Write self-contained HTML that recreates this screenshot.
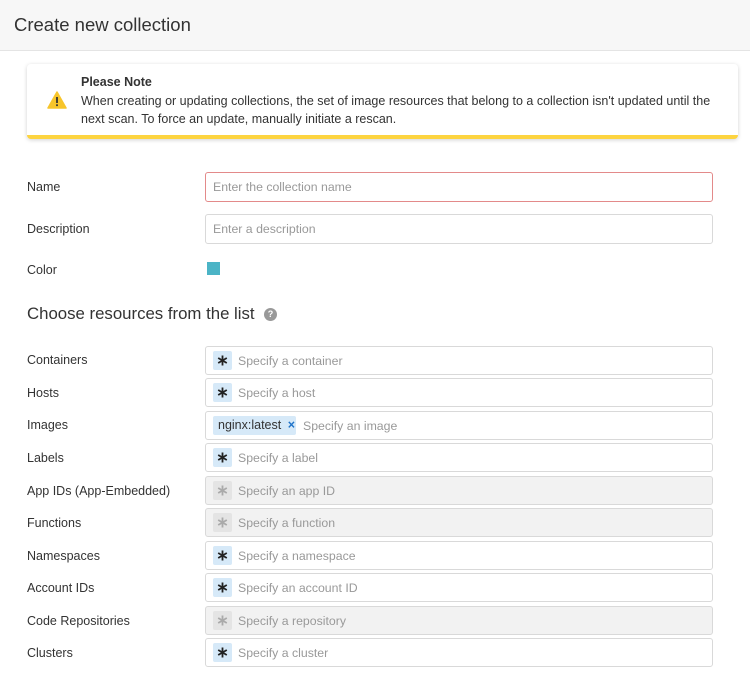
<!DOCTYPE html>
<html><head><style>
*{box-sizing:border-box;margin:0;padding:0}
body{width:750px;height:673px;overflow:hidden;background:#fff;font-family:"Liberation Sans",sans-serif;color:#333;position:relative}
.hdr{position:absolute;left:0;top:0;width:750px;height:51px;background:#f7f7f7;border-bottom:1px solid #e4e4e4}
.hdr h1{position:absolute;left:14px;top:14px;font-size:18.5px;font-weight:normal;color:#333}
.note{position:absolute;left:27px;top:64px;width:711px;height:75px;background:#fff;border-radius:4px;box-shadow:0 1px 4px rgba(0,0,0,.18);border-bottom:4px solid #fdd440}
.note b{position:absolute;left:54px;top:11px;font-size:12.5px}
.note p{position:absolute;left:54px;top:28px;width:640px;font-size:12.5px;line-height:18px}
.warn{position:absolute;left:20px;top:27px}
.lbl{position:absolute;left:27px;font-size:12.5px;color:#333}
.inp{position:absolute;left:205px;width:508px;height:29px;border:1px solid #d9d9d9;border-radius:3px;font-size:12.3px;color:#999;padding-left:7px;line-height:29px;background:#fff}
.inp.dis{background:#f2f2f2}
.chip{position:absolute;left:7px;top:4px;width:19px;height:19px;background:#d6e9f8;border-radius:2px}
.chip svg{position:absolute;left:4px;top:4px}
.chip path{stroke:#222}
.dis .chip{background:#e4e4e4}
.dis .chip path{stroke:#aaa}
.inp span.t{position:absolute;left:32px}
</style></head><body>
<div class="hdr"><h1>Create new collection</h1></div>
<div class="note">
<svg class="warn" width="20" height="18" viewBox="0 0 20 18"><path d="M10 1 L19 17 L1 17 Z" fill="#f7c52b" stroke="#f7c52b" stroke-linejoin="round" stroke-width="1.5"/><rect x="9.1" y="6" width="1.8" height="6" fill="#333"/><rect x="9.1" y="13.3" width="1.8" height="1.8" fill="#333"/></svg>
<b>Please Note</b>
<p>When creating or updating collections, the set of image resources that belong to a collection isn't updated until the next scan. To force an update, manually initiate a rescan.</p>
</div>
<div class="lbl" style="top:180px">Name</div>
<div class="inp" style="top:172px;height:30px;border-color:#e38a8a">Enter the collection name</div>
<div class="lbl" style="top:222px">Description</div>
<div class="inp" style="top:214px;height:30px">Enter a description</div>
<div class="lbl" style="top:263px">Color</div>
<div style="position:absolute;left:207px;top:262px;width:13px;height:13px;background:#4bb4c6"></div>
<div style="position:absolute;left:27px;top:304px;font-size:16.8px;color:#333">Choose resources from the list</div>
<div style="position:absolute;left:264px;top:308px;width:13px;height:13px;border-radius:50%;background:#999;color:#fff;font-size:9px;font-weight:bold;text-align:center;line-height:13px">?</div>

<div class="lbl" style="top:353px">Containers</div>
<div class="inp" style="top:346px"><div class="chip"><svg width="11" height="11" viewBox="0 0 11 11"><path d="M5.5 0.5V10.5M1.2 3L9.8 8M1.2 8L9.8 3" stroke-width="1.8" fill="none"/></svg></div><span class="t">Specify a container</span></div>
<div class="lbl" style="top:386px">Hosts</div>
<div class="inp" style="top:378px"><div class="chip"><svg width="11" height="11" viewBox="0 0 11 11"><path d="M5.5 0.5V10.5M1.2 3L9.8 8M1.2 8L9.8 3" stroke-width="1.8" fill="none"/></svg></div><span class="t">Specify a host</span></div>
<div class="lbl" style="top:418px">Images</div>
<div class="inp" style="top:411px"><div style="position:absolute;left:7px;top:4px;height:19px;width:83px;background:#d6e9f8;border-radius:2px;color:#333;font-size:12.5px;line-height:19px;padding-left:5px">nginx:latest <span style="color:#1f73c9;font-weight:bold;margin-left:3px">×</span></div><span style="position:absolute;left:97px">Specify an image</span></div>
<div class="lbl" style="top:451px">Labels</div>
<div class="inp" style="top:443px"><div class="chip"><svg width="11" height="11" viewBox="0 0 11 11"><path d="M5.5 0.5V10.5M1.2 3L9.8 8M1.2 8L9.8 3" stroke-width="1.8" fill="none"/></svg></div><span class="t">Specify a label</span></div>
<div class="lbl" style="top:484px">App IDs (App-Embedded)</div>
<div class="inp dis" style="top:476px"><div class="chip"><svg width="11" height="11" viewBox="0 0 11 11"><path d="M5.5 0.5V10.5M1.2 3L9.8 8M1.2 8L9.8 3" stroke-width="1.8" fill="none"/></svg></div><span class="t">Specify an app ID</span></div>
<div class="lbl" style="top:516px">Functions</div>
<div class="inp dis" style="top:508px"><div class="chip"><svg width="11" height="11" viewBox="0 0 11 11"><path d="M5.5 0.5V10.5M1.2 3L9.8 8M1.2 8L9.8 3" stroke-width="1.8" fill="none"/></svg></div><span class="t">Specify a function</span></div>
<div class="lbl" style="top:549px">Namespaces</div>
<div class="inp" style="top:541px"><div class="chip"><svg width="11" height="11" viewBox="0 0 11 11"><path d="M5.5 0.5V10.5M1.2 3L9.8 8M1.2 8L9.8 3" stroke-width="1.8" fill="none"/></svg></div><span class="t">Specify a namespace</span></div>
<div class="lbl" style="top:581px">Account IDs</div>
<div class="inp" style="top:573px"><div class="chip"><svg width="11" height="11" viewBox="0 0 11 11"><path d="M5.5 0.5V10.5M1.2 3L9.8 8M1.2 8L9.8 3" stroke-width="1.8" fill="none"/></svg></div><span class="t">Specify an account ID</span></div>
<div class="lbl" style="top:614px">Code Repositories</div>
<div class="inp dis" style="top:606px"><div class="chip"><svg width="11" height="11" viewBox="0 0 11 11"><path d="M5.5 0.5V10.5M1.2 3L9.8 8M1.2 8L9.8 3" stroke-width="1.8" fill="none"/></svg></div><span class="t">Specify a repository</span></div>
<div class="lbl" style="top:646px">Clusters</div>
<div class="inp" style="top:638px"><div class="chip"><svg width="11" height="11" viewBox="0 0 11 11"><path d="M5.5 0.5V10.5M1.2 3L9.8 8M1.2 8L9.8 3" stroke-width="1.8" fill="none"/></svg></div><span class="t">Specify a cluster</span></div>
</body></html>
